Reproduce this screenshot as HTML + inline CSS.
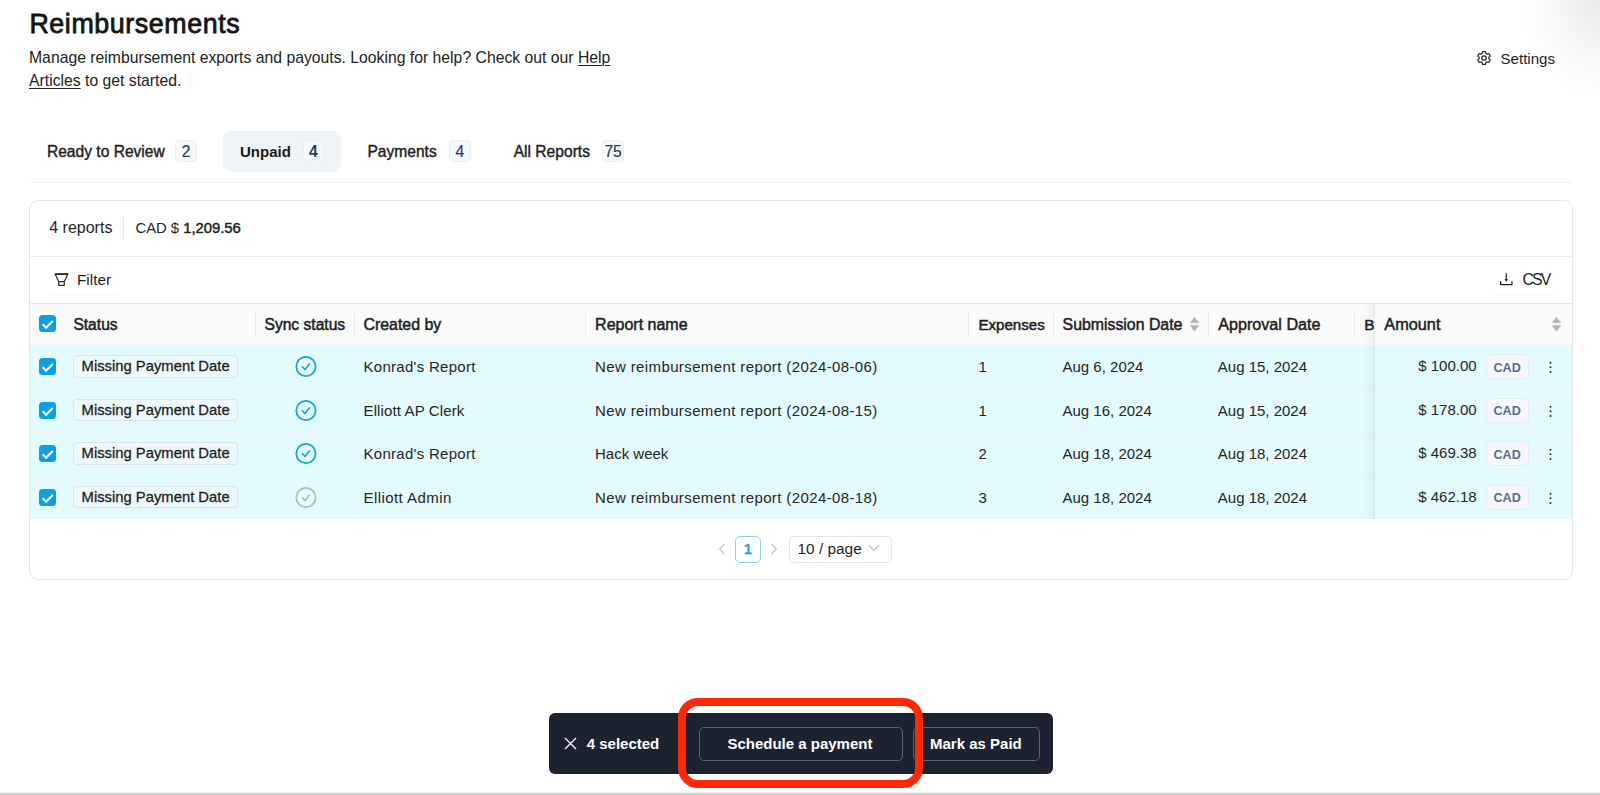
<!DOCTYPE html>
<html><head><meta charset="utf-8"><title>Reimbursements</title>
<style>
*{box-sizing:border-box;margin:0;padding:0}
html,body{width:1600px;height:795px;overflow:hidden;background:#fff}
body{position:relative;font-family:"Liberation Sans",sans-serif;color:#1f1f1f}
.a{position:absolute;white-space:nowrap;line-height:1}
u{text-decoration-thickness:1px;text-underline-offset:2px}
.corner{position:absolute;right:0;top:0;width:120px;height:120px;background:radial-gradient(ellipse 80px 100px at 100% 0%,rgba(0,0,0,0.085),rgba(0,0,0,0.03) 55%,rgba(0,0,0,0) 100%)}
.botband{position:absolute;left:0;right:0;bottom:0;height:2.6px;background:linear-gradient(rgba(255,255,255,0),#d0cfcd 60%,#cfcecc)}
</style></head>
<body>
<div class="corner"></div>
<div class="a" style="left:29.4px;top:10.61px;font-size:26.8px;font-weight:400;color:#141414;letter-spacing:0.6px;-webkit-text-stroke:0.8px #141414;">Reimbursements</div>
<div class="a" style="left:29px;top:49.66px;font-size:15.75px;font-weight:400;color:#222;">Manage reimbursement exports and payouts. Looking for help? Check out our <u>Help</u></div>
<div class="a" style="left:29px;top:73.26px;font-size:15.75px;font-weight:400;color:#222;"><u>Articles</u> to get started.</div>
<svg style="position:absolute;left:1476.05px;top:49.95px" width="16" height="16" viewBox="0 0 16 16"><path d="M6.16 3.46 L6.53 1.62 L9.47 1.62 L9.84 3.46 L11.02 4.14 L12.79 3.53 L14.26 6.08 L12.85 7.32 L12.85 8.68 L14.26 9.92 L12.79 12.47 L11.02 11.86 L9.84 12.54 L9.47 14.38 L6.53 14.38 L6.16 12.54 L4.98 11.86 L3.21 12.47 L1.74 9.92 L3.15 8.68 L3.15 7.32 L1.74 6.08 L3.21 3.53 L4.98 4.14 Z" fill="none" stroke="#262626" stroke-width="1.2" stroke-linejoin="round"/><circle cx="8" cy="8" r="2.2" fill="none" stroke="#262626" stroke-width="1.3"/></svg>
<div class="a" style="left:1500.5px;top:50.81px;font-size:15.1px;font-weight:400;color:#1f1f1f;">Settings</div>
<div style="position:absolute;left:222.75px;top:131px;width:118.5px;height:41px;background:#eef4f8;border-radius:8px"></div>
<div class="a" style="left:46.9px;top:143.69px;font-size:15.6px;font-weight:400;color:#222;-webkit-text-stroke:0.4px #222;">Ready to Review</div>
<div style="position:absolute;left:175px;top:140.3px;width:22px;height:21.5px;background:#f6f9fc;border:1px solid #eaeff4;border-radius:4px"></div>
<div class="a" style="left:186px;top:143.69px;font-size:15.6px;font-weight:400;color:#2a3c6e;transform:translateX(-50%);-webkit-text-stroke:0.2px #2a3c6e;">2</div>
<div class="a" style="left:240px;top:144.20px;font-size:15px;font-weight:700;color:#1a1a1a;">Unpaid</div>
<div style="position:absolute;left:303px;top:140.3px;width:20.5px;height:21.5px;background:#f6f9fc;border:1px solid #eaeff4;border-radius:4px"></div>
<div class="a" style="left:313.25px;top:143.69px;font-size:15.6px;font-weight:700;color:#2a3c6e;transform:translateX(-50%);">4</div>
<div class="a" style="left:367.4px;top:143.69px;font-size:15.6px;font-weight:400;color:#222;-webkit-text-stroke:0.4px #222;">Payments</div>
<div style="position:absolute;left:449px;top:140.3px;width:21.5px;height:21.5px;background:#f6f9fc;border:1px solid #eaeff4;border-radius:4px"></div>
<div class="a" style="left:459.75px;top:143.69px;font-size:15.6px;font-weight:400;color:#2a3c6e;transform:translateX(-50%);-webkit-text-stroke:0.2px #2a3c6e;">4</div>
<div class="a" style="left:513.7px;top:143.69px;font-size:15.6px;font-weight:400;color:#222;-webkit-text-stroke:0.4px #222;">All Reports</div>
<div style="position:absolute;left:602.2px;top:140.3px;width:21.8px;height:21.5px;background:#f6f9fc;border:1px solid #eaeff4;border-radius:4px"></div>
<div class="a" style="left:613.1px;top:143.69px;font-size:15.6px;font-weight:400;color:#2a3c6e;transform:translateX(-50%);-webkit-text-stroke:0.2px #2a3c6e;">75</div>
<div style="position:absolute;left:29px;top:182px;width:1543px;height:1px;background:#f0f0f0"></div>
<div style="position:absolute;left:29px;top:200px;width:1544px;height:380px;border:1px solid #e5e5e5;border-radius:9px;background:#fff"></div>
<div class="a" style="left:49.25px;top:219.65px;font-size:16px;font-weight:400;color:#262626;">4 reports</div>
<div style="position:absolute;left:123px;top:216.7px;width:1px;height:22.5px;background:#e5e5e5"></div>
<div class="a" style="left:135.5px;top:220.67px;font-size:14.8px;font-weight:400;color:#262626;">CAD $ <span style="-webkit-text-stroke:0.5px #262626">1,209.56</span></div>
<div style="position:absolute;left:30px;top:256px;width:1542px;height:1px;background:#ebebeb"></div>
<div style="position:absolute;left:46.7px;top:264.5px;width:73.2px;height:29px;border-radius:6px;box-shadow:0 2px 0 rgba(0,0,0,0.018)"></div>
<svg style="position:absolute;left:53.5px;top:272.5px" width="15" height="14" viewBox="0 0 15 14"><path d="M1.1 1.1H13.9L10.3 8.6V12.3H4.7V8.6Z M4.7 8.6H10.3" fill="none" stroke="#262626" stroke-width="1.15" stroke-linejoin="round"/><path d="M1.1 1.1H13.9" stroke="#262626" stroke-width="1.6"/></svg>
<div class="a" style="left:77px;top:272.05px;font-size:15.3px;font-weight:400;color:#1f1f1f;">Filter</div>
<div style="position:absolute;left:1490.25px;top:264.5px;width:65.75px;height:29px;border-radius:6px;box-shadow:0 2px 0 rgba(0,0,0,0.018)"></div>
<svg style="position:absolute;left:1499.5px;top:273px" width="13" height="13" viewBox="0 0 13 13"><path d="M6.25 0.3V7.2 M0.6 8.2V11.6H12V8.2" fill="none" stroke="#1f1f1f" stroke-width="1.2"/><path d="M4.3 6.3H8.2L6.25 8.6Z" fill="#1f1f1f"/></svg>
<div class="a" style="left:1522.5px;top:271.82px;font-size:15.8px;font-weight:400;color:#1f1f1f;letter-spacing:-1.9px;">CSV</div>
<div style="position:absolute;left:30px;top:303px;width:1542px;height:1px;background:#e8e8e8"></div>
<div style="position:absolute;left:30px;top:304px;width:1542px;height:41px;background:#fafafa"></div>
<div style="position:absolute;left:38.7px;top:315.4px;width:17px;height:17px;background:#0d9fe2;border-radius:3.5px"></div>
<svg style="position:absolute;left:38.7px;top:315.4px" width="17" height="17" viewBox="0 0 17 17"><path d="M3.7 9.2L7.1 12.7L13.8 6" fill="none" stroke="#fff" stroke-width="2.1"/></svg>
<div class="a" style="left:73.4px;top:316.59px;font-size:15.6px;font-weight:400;color:#1f1f1f;-webkit-text-stroke:0.5px #1f1f1f;">Status</div>
<div class="a" style="left:264.5px;top:316.59px;font-size:15.6px;font-weight:400;color:#1f1f1f;-webkit-text-stroke:0.5px #1f1f1f;">Sync status</div>
<div class="a" style="left:363.5px;top:316.94px;font-size:15.9px;font-weight:400;color:#1f1f1f;-webkit-text-stroke:0.5px #1f1f1f;">Created by</div>
<div class="a" style="left:595.1px;top:316.85px;font-size:16.0px;font-weight:400;color:#1f1f1f;-webkit-text-stroke:0.5px #1f1f1f;">Report name</div>
<div class="a" style="left:978.4px;top:317.01px;font-size:15.1px;font-weight:400;color:#1f1f1f;-webkit-text-stroke:0.5px #1f1f1f;">Expenses</div>
<div class="a" style="left:1062.6px;top:316.98px;font-size:15.85px;font-weight:400;color:#1f1f1f;-webkit-text-stroke:0.5px #1f1f1f;">Submission Date</div>
<div class="a" style="left:1218.2px;top:316.13px;font-size:16.15px;font-weight:400;color:#1f1f1f;-webkit-text-stroke:0.5px #1f1f1f;">Approval Date</div>
<div style="position:absolute;left:254.6px;top:312px;width:1px;height:24px;background:#ebebeb"></div>
<div style="position:absolute;left:353.7px;top:312px;width:1px;height:24px;background:#ebebeb"></div>
<div style="position:absolute;left:585.1px;top:312px;width:1px;height:24px;background:#ebebeb"></div>
<div style="position:absolute;left:967.8px;top:312px;width:1px;height:24px;background:#ebebeb"></div>
<div style="position:absolute;left:1052.7px;top:312px;width:1px;height:24px;background:#ebebeb"></div>
<div style="position:absolute;left:1207.9px;top:312px;width:1px;height:24px;background:#ebebeb"></div>
<div style="position:absolute;left:1353.5px;top:312px;width:1px;height:24px;background:#ebebeb"></div>
<svg style="position:absolute;left:1189.7px;top:316.7px" width="9" height="15" viewBox="0 0 9 15"><path d="M4.5 0.2L8.8 5.8H0.2z M4.5 14.2L8.8 8.4H0.2z" fill="#b3b3b3" stroke="#b3b3b3" stroke-width="0.4" stroke-linejoin="round"/></svg>
<div style="position:absolute;left:1360px;top:304px;width:14px;height:41px;overflow:hidden">
<div class="a" style="left:4.2px;top:12.68px;font-size:15.5px;font-weight:400;color:#1f1f1f;-webkit-text-stroke:0.5px #1f1f1f;">B.</div>
</div>
<div style="position:absolute;left:30px;top:345px;width:1542px;height:43.5px;background:#e3fafe"></div>
<div style="position:absolute;left:38.7px;top:358.2px;width:17px;height:17px;background:#0d9fe2;border-radius:3.5px"></div>
<svg style="position:absolute;left:38.7px;top:358.2px" width="17" height="17" viewBox="0 0 17 17"><path d="M3.7 9.2L7.1 12.7L13.8 6" fill="none" stroke="#fff" stroke-width="2.1"/></svg>
<div style="position:absolute;left:72.5px;top:355.3px;width:165.6px;height:22.4px;background:#edf9fd;border:1px solid #dce2e7;border-radius:4px"></div>
<div class="a" style="left:81.6px;top:359.37px;font-size:14.8px;font-weight:400;color:#1f1f1f;-webkit-text-stroke:0.3px #1f1f1f;">Missing Payment Date</div>
<svg style="position:absolute;left:294.5px;top:356px" width="22" height="22" viewBox="0 0 22 22"><circle cx="10.95" cy="10.55" r="9.65" fill="none" stroke="#17a0e3" stroke-width="1.75"/><path d="M6.9 10.3L10 13.6L14.8 7.4" fill="none" stroke="#17a0e3" stroke-width="1.6"/></svg>
<div class="a" style="left:363.5px;top:359.20px;font-size:15px;font-weight:400;color:#262626;letter-spacing:0.284px;">Konrad&#x27;s Report</div>
<div class="a" style="left:595px;top:359.20px;font-size:15px;font-weight:400;color:#262626;letter-spacing:0.385px;">New reimbursement report (2024-08-06)</div>
<div class="a" style="left:978.4px;top:359.20px;font-size:15px;font-weight:400;color:#262626;">1</div>
<div class="a" style="left:1062.5px;top:359.20px;font-size:15px;font-weight:400;color:#262626;">Aug 6, 2024</div>
<div class="a" style="left:1217.8px;top:359.20px;font-size:15px;font-weight:400;color:#262626;">Aug 15, 2024</div>
<div class="a" style="right:123.4px;top:358.40px;font-size:15px;font-weight:400;color:#262626;">$ 100.00</div>
<div style="position:absolute;left:1485.5px;top:354.3px;width:43.2px;height:24.9px;background:#f5f7fa;border:1px solid #e8ecf0;border-radius:4px"></div>
<div class="a" style="left:1507.1px;top:361.53px;font-size:12.6px;font-weight:700;color:#5a6d90;transform:translateX(-50%);">CAD</div>
<svg style="position:absolute;left:1547.5px;top:361px" width="5" height="13" viewBox="0 0 5 13"><circle cx="2.5" cy="1.75" r="1.0" fill="#2a2a2a"/><circle cx="2.5" cy="6.35" r="1.0" fill="#2a2a2a"/><circle cx="2.5" cy="10.95" r="1.0" fill="#2a2a2a"/></svg>
<div style="position:absolute;left:30px;top:388.5px;width:1542px;height:43.5px;background:#e3fafe"></div>
<div style="position:absolute;left:38.7px;top:401.7px;width:17px;height:17px;background:#0d9fe2;border-radius:3.5px"></div>
<svg style="position:absolute;left:38.7px;top:401.7px" width="17" height="17" viewBox="0 0 17 17"><path d="M3.7 9.2L7.1 12.7L13.8 6" fill="none" stroke="#fff" stroke-width="2.1"/></svg>
<div style="position:absolute;left:72.5px;top:398.8px;width:165.6px;height:22.4px;background:#edf9fd;border:1px solid #dce2e7;border-radius:4px"></div>
<div class="a" style="left:81.6px;top:402.87px;font-size:14.8px;font-weight:400;color:#1f1f1f;-webkit-text-stroke:0.3px #1f1f1f;">Missing Payment Date</div>
<svg style="position:absolute;left:294.5px;top:399.5px" width="22" height="22" viewBox="0 0 22 22"><circle cx="10.95" cy="10.55" r="9.65" fill="none" stroke="#17a0e3" stroke-width="1.75"/><path d="M6.9 10.3L10 13.6L14.8 7.4" fill="none" stroke="#17a0e3" stroke-width="1.6"/></svg>
<div class="a" style="left:363.5px;top:402.70px;font-size:15px;font-weight:400;color:#262626;letter-spacing:0.123px;">Elliott AP Clerk</div>
<div class="a" style="left:595px;top:402.70px;font-size:15px;font-weight:400;color:#262626;letter-spacing:0.385px;">New reimbursement report (2024-08-15)</div>
<div class="a" style="left:978.4px;top:402.70px;font-size:15px;font-weight:400;color:#262626;">1</div>
<div class="a" style="left:1062.5px;top:402.70px;font-size:15px;font-weight:400;color:#262626;">Aug 16, 2024</div>
<div class="a" style="left:1217.8px;top:402.70px;font-size:15px;font-weight:400;color:#262626;">Aug 15, 2024</div>
<div class="a" style="right:123.4px;top:401.90px;font-size:15px;font-weight:400;color:#262626;">$ 178.00</div>
<div style="position:absolute;left:1485.5px;top:397.8px;width:43.2px;height:24.9px;background:#f5f7fa;border:1px solid #e8ecf0;border-radius:4px"></div>
<div class="a" style="left:1507.1px;top:405.03px;font-size:12.6px;font-weight:700;color:#5a6d90;transform:translateX(-50%);">CAD</div>
<svg style="position:absolute;left:1547.5px;top:404.5px" width="5" height="13" viewBox="0 0 5 13"><circle cx="2.5" cy="1.75" r="1.0" fill="#2a2a2a"/><circle cx="2.5" cy="6.35" r="1.0" fill="#2a2a2a"/><circle cx="2.5" cy="10.95" r="1.0" fill="#2a2a2a"/></svg>
<div style="position:absolute;left:30px;top:432px;width:1542px;height:43.5px;background:#e3fafe"></div>
<div style="position:absolute;left:38.7px;top:445.2px;width:17px;height:17px;background:#0d9fe2;border-radius:3.5px"></div>
<svg style="position:absolute;left:38.7px;top:445.2px" width="17" height="17" viewBox="0 0 17 17"><path d="M3.7 9.2L7.1 12.7L13.8 6" fill="none" stroke="#fff" stroke-width="2.1"/></svg>
<div style="position:absolute;left:72.5px;top:442.3px;width:165.6px;height:22.4px;background:#edf9fd;border:1px solid #dce2e7;border-radius:4px"></div>
<div class="a" style="left:81.6px;top:446.37px;font-size:14.8px;font-weight:400;color:#1f1f1f;-webkit-text-stroke:0.3px #1f1f1f;">Missing Payment Date</div>
<svg style="position:absolute;left:294.5px;top:443px" width="22" height="22" viewBox="0 0 22 22"><circle cx="10.95" cy="10.55" r="9.65" fill="none" stroke="#17a0e3" stroke-width="1.75"/><path d="M6.9 10.3L10 13.6L14.8 7.4" fill="none" stroke="#17a0e3" stroke-width="1.6"/></svg>
<div class="a" style="left:363.5px;top:446.20px;font-size:15px;font-weight:400;color:#262626;letter-spacing:0.284px;">Konrad&#x27;s Report</div>
<div class="a" style="left:595px;top:446.20px;font-size:15px;font-weight:400;color:#262626;letter-spacing:-0.007px;">Hack week</div>
<div class="a" style="left:978.4px;top:446.20px;font-size:15px;font-weight:400;color:#262626;">2</div>
<div class="a" style="left:1062.5px;top:446.20px;font-size:15px;font-weight:400;color:#262626;">Aug 18, 2024</div>
<div class="a" style="left:1217.8px;top:446.20px;font-size:15px;font-weight:400;color:#262626;">Aug 18, 2024</div>
<div class="a" style="right:123.4px;top:445.40px;font-size:15px;font-weight:400;color:#262626;">$ 469.38</div>
<div style="position:absolute;left:1485.5px;top:441.3px;width:43.2px;height:24.9px;background:#f5f7fa;border:1px solid #e8ecf0;border-radius:4px"></div>
<div class="a" style="left:1507.1px;top:448.53px;font-size:12.6px;font-weight:700;color:#5a6d90;transform:translateX(-50%);">CAD</div>
<svg style="position:absolute;left:1547.5px;top:448px" width="5" height="13" viewBox="0 0 5 13"><circle cx="2.5" cy="1.75" r="1.0" fill="#2a2a2a"/><circle cx="2.5" cy="6.35" r="1.0" fill="#2a2a2a"/><circle cx="2.5" cy="10.95" r="1.0" fill="#2a2a2a"/></svg>
<div style="position:absolute;left:30px;top:475.5px;width:1542px;height:43.5px;background:#e3fafe"></div>
<div style="position:absolute;left:38.7px;top:488.7px;width:17px;height:17px;background:#0d9fe2;border-radius:3.5px"></div>
<svg style="position:absolute;left:38.7px;top:488.7px" width="17" height="17" viewBox="0 0 17 17"><path d="M3.7 9.2L7.1 12.7L13.8 6" fill="none" stroke="#fff" stroke-width="2.1"/></svg>
<div style="position:absolute;left:72.5px;top:485.8px;width:165.6px;height:22.4px;background:#edf9fd;border:1px solid #dce2e7;border-radius:4px"></div>
<div class="a" style="left:81.6px;top:489.87px;font-size:14.8px;font-weight:400;color:#1f1f1f;-webkit-text-stroke:0.3px #1f1f1f;">Missing Payment Date</div>
<svg style="position:absolute;left:294.5px;top:486.5px" width="22" height="22" viewBox="0 0 22 22"><circle cx="10.95" cy="10.55" r="9.65" fill="none" stroke="#b9b9b9" stroke-width="1.75"/><path d="M6.9 10.3L10 13.6L14.8 7.4" fill="none" stroke="#b9b9b9" stroke-width="1.6"/></svg>
<div class="a" style="left:363.5px;top:489.70px;font-size:15px;font-weight:400;color:#262626;letter-spacing:0.435px;">Elliott Admin</div>
<div class="a" style="left:595px;top:489.70px;font-size:15px;font-weight:400;color:#262626;letter-spacing:0.385px;">New reimbursement report (2024-08-18)</div>
<div class="a" style="left:978.4px;top:489.70px;font-size:15px;font-weight:400;color:#262626;">3</div>
<div class="a" style="left:1062.5px;top:489.70px;font-size:15px;font-weight:400;color:#262626;">Aug 18, 2024</div>
<div class="a" style="left:1217.8px;top:489.70px;font-size:15px;font-weight:400;color:#262626;">Aug 18, 2024</div>
<div class="a" style="right:123.4px;top:488.90px;font-size:15px;font-weight:400;color:#262626;">$ 462.18</div>
<div style="position:absolute;left:1485.5px;top:484.8px;width:43.2px;height:24.9px;background:#f5f7fa;border:1px solid #e8ecf0;border-radius:4px"></div>
<div class="a" style="left:1507.1px;top:492.03px;font-size:12.6px;font-weight:700;color:#5a6d90;transform:translateX(-50%);">CAD</div>
<svg style="position:absolute;left:1547.5px;top:491.5px" width="5" height="13" viewBox="0 0 5 13"><circle cx="2.5" cy="1.75" r="1.0" fill="#2a2a2a"/><circle cx="2.5" cy="6.35" r="1.0" fill="#2a2a2a"/><circle cx="2.5" cy="10.95" r="1.0" fill="#2a2a2a"/></svg>
<div style="position:absolute;left:30px;top:388px;width:1542px;height:1px;background:#e9f3f4"></div>
<div style="position:absolute;left:30px;top:432px;width:1542px;height:1px;background:#e9f3f4"></div>
<div style="position:absolute;left:30px;top:475px;width:1542px;height:1px;background:#e9f3f4"></div>
<div style="position:absolute;left:1364.5px;top:304px;width:10px;height:215px;background:linear-gradient(90deg,rgba(0,50,70,0),rgba(0,50,70,0.06))"></div>
<div style="position:absolute;left:1374.2px;top:304px;width:1px;height:215px;background:rgba(0,50,70,0.02)"></div>
<div class="a" style="left:1384.3px;top:316.00px;font-size:16.3px;font-weight:400;color:#1f1f1f;-webkit-text-stroke:0.5px #1f1f1f;">Amount</div>
<svg style="position:absolute;left:1552.4px;top:316.7px" width="9" height="15" viewBox="0 0 9 15"><path d="M4.5 0.2L8.8 5.8H0.2z M4.5 14.2L8.8 8.4H0.2z" fill="#b3b3b3" stroke="#b3b3b3" stroke-width="0.4" stroke-linejoin="round"/></svg>
<svg style="position:absolute;left:717px;top:542px" width="10" height="14" viewBox="0 0 10 14"><path d="M7.6 1.8L2.7 7l4.9 5.2" fill="none" stroke="#c4c4c4" stroke-width="1.15"/></svg>
<div style="position:absolute;left:735px;top:536px;width:26px;height:26.5px;border:1.4px solid #8ccdf1;border-radius:5px"></div>
<div class="a" style="left:748px;top:541.28px;font-size:15.5px;font-weight:400;color:#14a0e3;transform:translateX(-50%);-webkit-text-stroke:0.6px #14a0e3;">1</div>
<svg style="position:absolute;left:768.5px;top:542px" width="10" height="14" viewBox="0 0 10 14"><path d="M2.4 1.8l4.9 5.2-4.9 5.2" fill="none" stroke="#bdbdbd" stroke-width="1.15"/></svg>
<div style="position:absolute;left:788.75px;top:536px;width:103px;height:26.5px;border:1.2px solid #e6e6e6;border-radius:5px"></div>
<div class="a" style="left:797.5px;top:541.36px;font-size:15.4px;font-weight:400;color:#1f1f1f;">10 / page</div>
<svg style="position:absolute;left:867.5px;top:544px" width="12" height="9" viewBox="0 0 12 9"><path d="M1 1.5l5 5 5-5" fill="none" stroke="#bfbfbf" stroke-width="1.2"/></svg>
<div style="position:absolute;left:548.6px;top:713px;width:504.5px;height:60.5px;background:#1d2230;border-radius:6px"></div>
<svg style="position:absolute;left:564px;top:736.8px" width="13" height="13" viewBox="0 0 13 13"><path d="M1 1l11 11M12 1L1 12" stroke="#fff" stroke-width="1.3"/></svg>
<div class="a" style="left:586.7px;top:735.60px;font-size:15px;font-weight:700;color:#fff;">4 selected</div>
<div style="position:absolute;left:699px;top:727px;width:204px;height:33.8px;border:1px solid #5a6478;border-radius:5px"></div>
<div class="a" style="left:727.4px;top:735.60px;font-size:15px;font-weight:700;color:#fff;">Schedule a payment</div>
<div style="position:absolute;left:913px;top:727px;width:126.6px;height:33.8px;border:1px solid #5a6478;border-radius:5px"></div>
<div class="a" style="left:930px;top:735.60px;font-size:15px;font-weight:700;color:#fff;">Mark as Paid</div>
<div style="position:absolute;left:677.5px;top:697.6px;width:245.7px;height:90.6px;border:8px solid #ff2806;border-radius:20px"></div>
<div class="botband"></div>
</body></html>
